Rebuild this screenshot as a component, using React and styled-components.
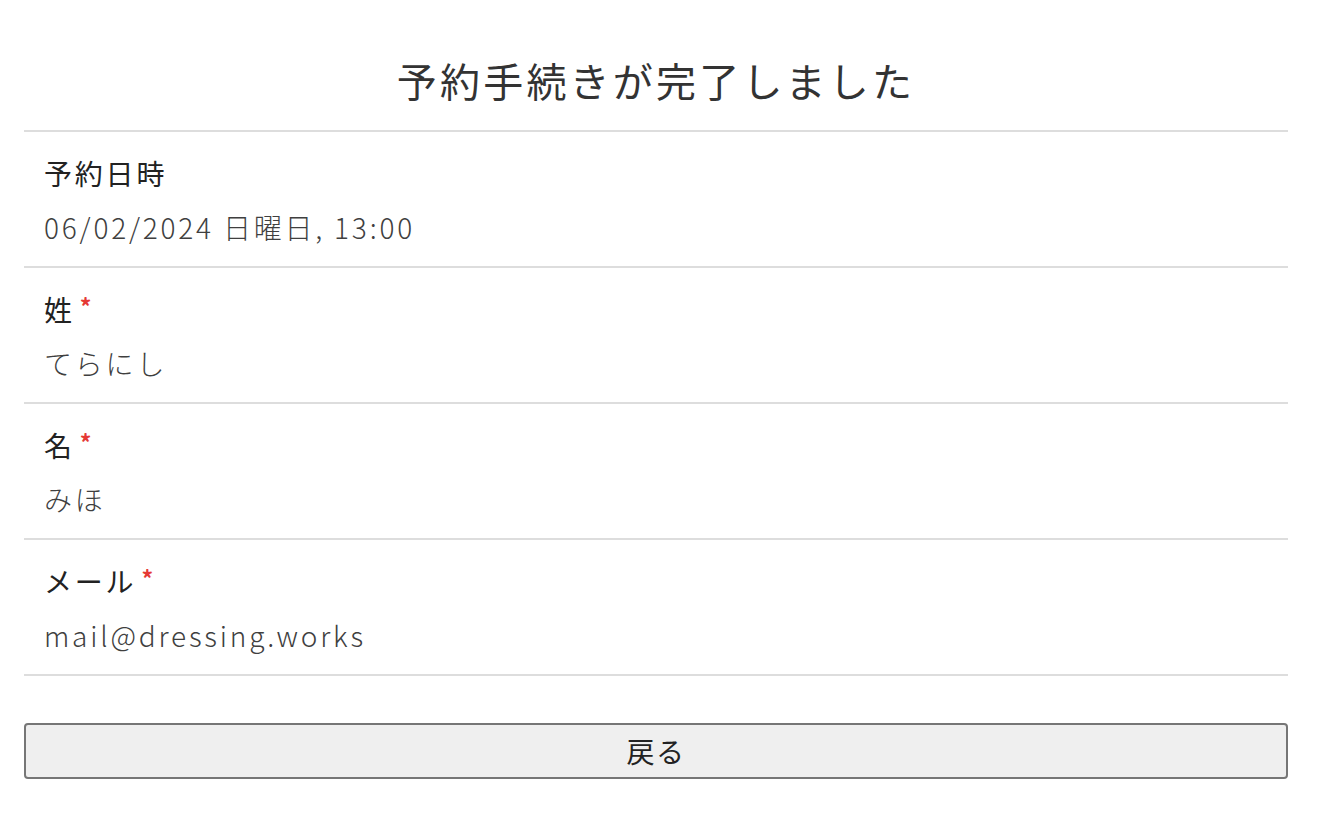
import styled, { createGlobalStyle } from "styled-components";

const GlobalStyle = createGlobalStyle`
    body {
        margin: 0;
        background: #fff;
        font-family: "Noto Sans CJK JP", "Noto Sans", sans-serif;
        color: #333;
    }
`;

const rows = [
    { label: "予約日時", value: "06/02/2024 日曜日, 13:00" },
    { label: "姓", value: "てらにし", required: true },
    { label: "名", value: "みほ", required: true },
    { label: "メール", value: "mail@dressing.works", required: true },
];

export default function App() {
    return (
        <>
            <GlobalStyle />
            <Page>
                <Title>予約手続きが完了しました</Title>
                {rows.map((r) => (
                    <Row key={r.label}>
                        <Label>
                            {r.label}
                            {r.required && <Required>*</Required>}
                        </Label>
                        <Value>{r.value}</Value>
                    </Row>
                ))}
                <BackButton type="button">戻る</BackButton>
            </Page>
        </>
    );
}

const Page = styled.div`
    margin: 0 32px 0 24px;
    display: flex;
    flex-direction: column;
`;

const Title = styled.h1`
    margin: 0;
    padding: 50px 0 20px;
    line-height: 60px;
    font-size: 40px;
    font-weight: 400;
    letter-spacing: 0.08em;
    text-align: center;
    color: #333;
    border-bottom: 2px solid #ddd;
`;

const Row = styled.div`
    padding: 21px 20px 19px;
    display: flex;
    flex-direction: column;
    gap: 14px;
    border-bottom: 2px solid #ddd;
`;

const Label = styled.div`
    font-size: 28px;
    line-height: 40px;
    font-weight: 400;
    letter-spacing: 0.1em;
    color: #222;
    display: flex;
    align-items: center;
`;

const Required = styled.span`
    color: #e53935;
    font-size: 23px;
    font-weight: 700;
    margin-left: 5px;
    margin-top: -6px;
`;

const Value = styled.div`
    font-size: 28px;
    line-height: 40px;
    font-weight: 300;
    letter-spacing: 0.1em;
    color: #3f3f3f;
`;

const BackButton = styled.button`
    margin-top: 47px;
    height: 56px;
    background: #efefef;
    border: 2px solid #767676;
    border-radius: 4px;
    font-family: inherit;
    font-size: 28px;
    color: #222;
    letter-spacing: 0.05em;
`;
